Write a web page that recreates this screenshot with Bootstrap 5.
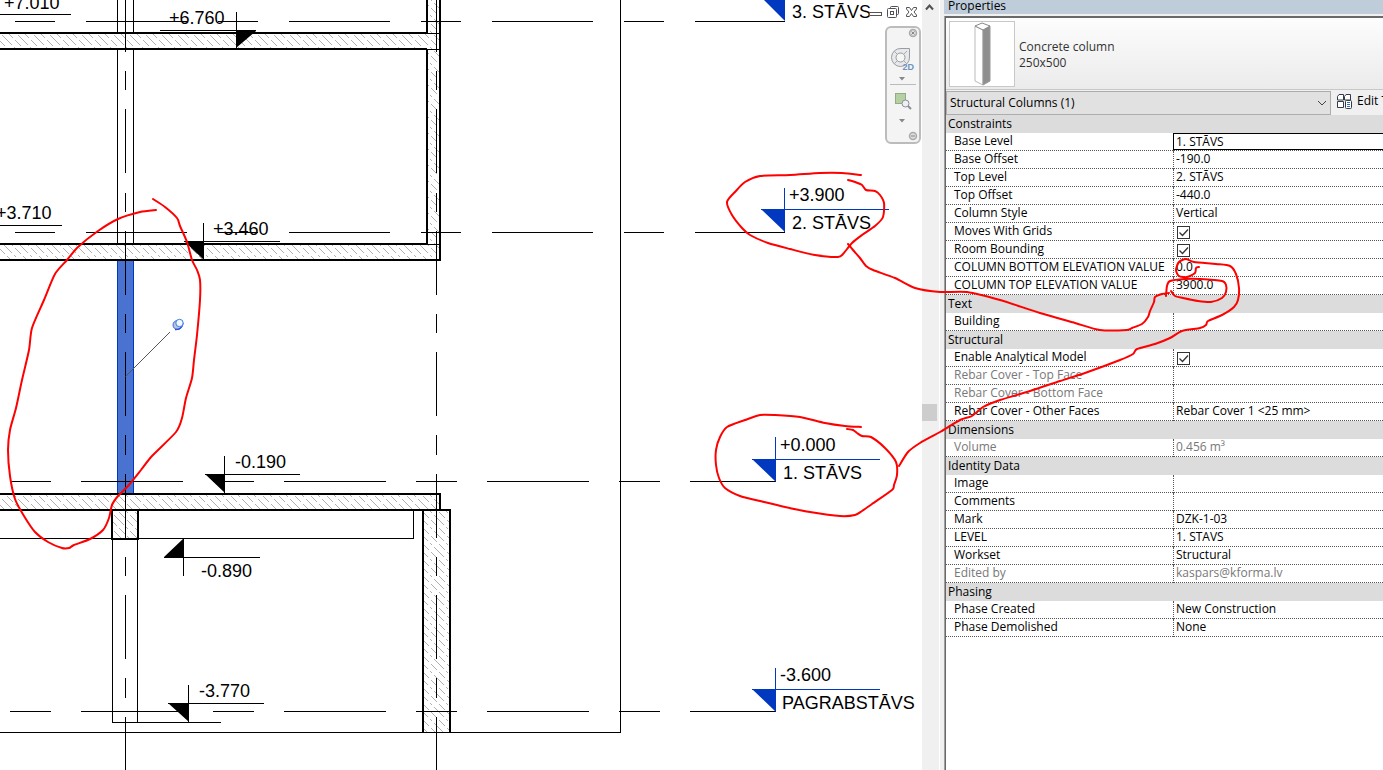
<!DOCTYPE html>
<html lang="en">
<head>
<meta charset="utf-8">
<meta name="viewport" content="width=device-width, initial-scale=1">
<title>Section view with column properties</title>
<link href="https://cdn.jsdelivr.net/npm/bootstrap@5.3.0/dist/css/bootstrap.min.css" rel="stylesheet">
<style>
  body { font-family: "Open Sans", "Noto Sans", sans-serif; font-size: 12px; line-height: 16px; color: #000; background: #fff; }
  .tag-text { font-family: "Liberation Sans", Arial, sans-serif; font-size: 18px; fill: #000; }
  .thin { stroke: #000; stroke-width: 1; fill: none; shape-rendering: crispEdges; }
  .thick { stroke: #000; stroke-width: 2; fill: none; shape-rendering: crispEdges; }
  .level { stroke: #0038c0; stroke-width: 1; fill: none; shape-rendering: crispEdges; }
  .level-fill { fill: #0038c0; }
  .markup path { fill: none; stroke: #f00; stroke-width: 2; stroke-linecap: round; stroke-linejoin: round; }
  .markup { pointer-events: none; }
  .view-controls { top: 4px; right: 4px; gap: 4px; }
  .nav-widget { top: 26px; right: 1px; width: 36px; height: 118px; border: 2px solid #bcbcbc; border-radius: 6px; background: #f4f4f4; }
  .bare { border: 0; padding: 0; background: none; display: flex; line-height: 0; }
  .scroll-track { width: 17px; background: #f0f0f0; }
  .scroll-thumb { height: 17px; width: 15px; background: #cdcdcd; top: 404px; }
  .splitter { width: 5px; background: #f0f0f0; border-left: 1px solid #fff; }
  .props { width: 439px; background: #f0f0f0; }
  .props-title { height: 14px; line-height: 12px; padding-left: 4px; background: #bfcddb; }
  .props-body { border-left: 1px solid #696969; border-top: 2px solid #696969; box-shadow: -1px 0 #a0a0a0; margin: 2px 0 0 1px; background: #fff; }
  .type-box { height: 72px; padding: 3px; background: linear-gradient(#fdfdfd, #ebebeb); border-bottom: 1px solid #c8c8c8; color: #333; }
  .type-name { padding-top: 2px; }
  .thumb { width: 66px; height: 66px; background: #fff; border: 1px solid #c8c8c8; }
  .filter-row { height: 25px; background: #f0f0f0; padding-top: 1px; }
  .filter { width: 385px; height: 24px; border: 1px solid #adadad; background: #e1e1e1; padding: 0 3px; font: inherit; line-height: 22px; appearance: none; color: #000; }
  .filter-wrap svg { right: 4px; top: 9px; pointer-events: none; }
  .edit-type { font: inherit; color: #000; gap: 4px; padding: 0 0 4px 5px; }
  .grid { border-collapse: separate; border-spacing: 0; table-layout: fixed; line-height: 16px; }
  .grid col:first-child { width: 227px; }
  .grid th, .grid td { height: 18px; padding: 0 0 1px; font-weight: 400; white-space: nowrap; vertical-align: middle; }
  .grid thead th { background: #dcdcdc; padding: 0 0 1px 2px; }
  .grid tbody th, .grid tbody td { border-bottom: 1px dotted #555; }
  .grid tbody th { padding-left: 8px; }
  .grid td { border-left: 1px dotted #555; padding-left: 2px; }
  .grid td.editing { padding: 0; border-left: 0; }
  .editing input { height: 17px; border: 1px solid #000; border-right: 0; padding: 0 2px 1px; outline: 0; font: inherit; display: block; width: 100%; }
  .grid .off { color: #787878; }
  .tick { appearance: none; width: 13px; height: 13px; border: 1px solid #333; margin: 3px 0 0 1px; display: block; background: #fff url("data:image/svg+xml,%3Csvg xmlns='http://www.w3.org/2000/svg' viewBox='0 0 11 11'%3E%3Cpath d='M1.500 5.500 4.500 8.500 10 2.500' fill='none' stroke='%23333' stroke-width='1.300'/%3E%3C/svg%3E"); }
</style>
<script src="https://cdn.jsdelivr.net/npm/bootstrap@5.3.0/dist/js/bootstrap.bundle.min.js"></script>
</head>
<body>
<div class="d-flex vh-100 overflow-hidden position-relative">

  <main class="flex-grow-1 position-relative overflow-hidden">
    <svg class="w-100 h-100 d-block" role="img" aria-label="Building section">
      <defs>
        <pattern id="hatch" width="16" height="16" patternUnits="userSpaceOnUse" patternTransform="translate(2 3)">
          <path d="M0 0 10 10M12 12 14 14M8 0 11 3M13 5 16 8M0 8 3 11M5 13 8 16" stroke="#b0b0b0" fill="none" shape-rendering="crispEdges"/>
        </pattern>
      </defs>
      <!-- slabs, walls and beam in section -->
      <g fill="url(#hatch)">
        <path d="M0 33H440V49H0ZM427 0H440V260H427ZM0 244H427V260H0ZM0 494H440V510H0ZM112 510H138V539H112ZM423 510H450V732H423Z"/>
      </g>
      <rect x="117" y="261" width="17" height="232" fill="#4a73d1"/>
      <path class="level" d="M117.500 261V493M133.500 261V493"/>
      <path class="thick" d="M0 33H427M427 0V34M440 0V261M0 49H427M427 49V245M0 244H427M0 260H441M0 494H441M440 494V510M0 510H451M112 510V540M138 510V540M112 539H139M423 510V733M450 510V733"/>
      <path class="thin" d="M427 33.500H440M427 49.500H440M427 244.500H440M117.500 0V32M133.500 0V32M117.500 50V243M133.500 50V243"/>
      <path class="thin" d="M0 538.500H413.500V511M112.500 540V722.500H221M137.500 540V722M0 732.500H620.500V0"/>
      <!-- grid centre lines -->
      <path class="thin" d="M125.500 0V52M125.500 71V90M125.500 109V173M125.500 193V212M125.500 231V295M125.500 314V333M125.500 352V416M125.500 435V455M125.500 474V538M125.500 557V576M125.500 595V659M125.500 678V698M125.500 717V2000"/>
      <path class="thin" d="M436.500 0V52M436.500 71V90M436.500 109V173M436.500 193V212M436.500 231V295M436.500 314V333M436.500 352V416M436.500 435V455M436.500 474V538M436.500 557V576M436.500 595V659M436.500 678V698M436.500 717V2000"/>
      <!-- level lines -->
      <path class="thin" d="M15 21.500H55M86 21.500H187M218 21.500H258M289 21.500H390M421 21.500H461M492 21.500H593M624 21.500H664M695 21.500H785"/>
      <path class="thin" d="M15 232.500H55M86 232.500H187M218 232.500H258M289 232.500H390M421 232.500H461M492 232.500H593M624 232.500H664M695 232.500H785"/>
      <path class="thin" d="M10 481.500H51M81 481.500H183M213 481.500H254M284 481.500H386M416 481.500H457M487 481.500H589M619 481.500H660M690 481.500H776"/>
      <path class="thin" d="M10 711.500H51M81 711.500H183M213 711.500H254M284 711.500H386M416 711.500H457M487 711.500H589M619 711.500H660M690 711.500H776"/>
      <!-- level heads -->
      <path class="level-fill" d="M762 -2H785V21ZM761 209H785V232ZM752 459H776V482ZM752 689H776V712Z"/>
      <path class="level" d="M784.500 188V232M761 209.500H889M775.500 437V481M752 459.500H880M775.500 668V711M752 689.500H880"/>
      <!-- spot elevations -->
      <path d="M236 31H256L236 48ZM184 241H204V260ZM205 474H225V493ZM164 557 184 538V557ZM168 703H189V722Z"/>
      <path class="thin" d="M0 14.500H71M160 30.500H256M236.500 12V48M0 225.500H62M184 241.500H280M203.500 223V260M205 474.500H300M224.500 456V493M164 557.500H260M183.500 538V576M168 703.500H264M188.500 685V722"/>
      <g class="tag-text">
        <text x="4" y="9">+7.010</text>
        <text x="169" y="24">+6.760</text>
        <text x="-4" y="219">+3.710</text>
        <text x="213" y="235">+3.460</text>
        <text x="235" y="468">-0.190</text>
        <text x="201" y="577">-0.890</text>
        <text x="199" y="697">-3.770</text>
        <text x="792" y="18">3. STĀVS</text>
        <text x="789" y="201">+3.900</text>
        <text x="792" y="229">2. STĀVS</text>
        <text x="780" y="451">+0.000</text>
        <text x="783" y="479">1. STĀVS</text>
        <text x="780" y="681">-3.600</text>
        <text x="782" y="709">PAGRABSTĀVS</text>
      </g>
      <!-- pin on the selected column -->
      <path d="M125.500 376.500 170 332" stroke="#555" fill="none"/>
      <circle cx="177.500" cy="325" r="4.500" fill="#b9c6d6" stroke="#3b63f0"/>
      <path d="M175 329.500Q182 330 183 323" stroke="#2a4fe0" stroke-width="1.500" fill="none"/>
      <circle cx="179.500" cy="323" r="3.700" fill="#eefaff" stroke="#3b7be8"/>
    </svg>

    <div class="view-controls position-absolute d-flex align-items-center">
      <button class="bare" type="button" aria-label="Minimize"><svg width="14" height="16"><rect x="1.500" y="8.500" width="12" height="3" fill="#fff" stroke="#555"/></svg></button>
      <button class="bare" type="button" aria-label="Restore"><svg width="14" height="16" fill="#fff" stroke="#505058"><rect x="4.500" y="2.500" width="8" height="8" rx="1"/><rect x="1.500" y="4.500" width="9" height="9" rx="1"/><rect x="4.500" y="7.500" width="3" height="3"/></svg></button>
      <button class="bare" type="button" aria-label="Close"><svg width="14" height="16" fill="#fff" stroke="#555"><path d="M2.500 3.500H5.500L7.500 6.500 9.500 3.500H12.500V5L10 8 12.500 11V12.500H9.500L7.500 9.500 5.500 12.500H2.500V11L5 8 2.500 5Z"/></svg></button>
    </div>

    <div class="nav-widget position-absolute">
      <svg width="32" height="114" viewBox="0 0 32 114" fill="none">
        <circle cx="26" cy="5" r="3.500" fill="#ddd" stroke="#aaa" stroke-width="1.500"/><path d="m24.500 3.500 3 3m0-3-3 3" stroke="#888"/>
        <path d="M14 20.500H22.500V29A9 9 0 1 1 14 20.500Z" fill="#e7e9ec" stroke="#9a9ca0"/>
        <circle cx="13.500" cy="29.500" r="4.500" fill="#f6f6f6" stroke="#999"/>
        <path d="m7 23 3 3m7 7 3 3m0-13-3 3m-7 7-3 3" stroke="#aaa"/>
        <text x="15.500" y="42" font-family="Liberation Sans, sans-serif" font-size="9" font-weight="700" fill="#6f93bd">2D</text>
        <path d="M12 49h6l-3 3.500ZM12 91h6l-3 3.500Z" fill="#888"/>
        <path d="M3 56.500h26" stroke="#bbb"/>
        <rect x="8.500" y="65.500" width="10" height="10" fill="#b5d1a4" stroke="#94ac86"/>
        <circle cx="18.500" cy="75.500" r="3.500" fill="#eef0f6" stroke="#8c8f96"/><path d="m21 78 3 3" stroke="#8c8f96" stroke-width="2"/>
        <circle cx="26" cy="108" r="3.500" fill="#ddd" stroke="#aaa" stroke-width="1.500"/><path d="M24 108h4" stroke="#888"/>
      </svg>
    </div>
  </main>

  <div class="scroll-track flex-shrink-0 position-relative">
    <svg class="d-block" width="17" height="17" fill="none"><path d="m4 9.500 3.500-4 3.500 4" stroke="#505050" stroke-width="2"/></svg>
    <div class="scroll-thumb position-absolute"></div>
  </div>
  <div class="splitter flex-shrink-0"></div>

  <aside class="props flex-shrink-0 d-flex flex-column overflow-hidden">
    <div class="props-title">Properties</div>
    <div class="props-body flex-grow-1">
      <div class="type-box d-flex align-items-center gap-1">
        <div class="thumb flex-shrink-0">
          <svg class="d-block" width="64" height="64" stroke-width="1"><path d="M25 4 33 8V63L25 59Z" fill="#fff" stroke="#bbb"/><path d="M33 8 40 4V59L33 63Z" fill="#8f8f8f" stroke="#999"/><path d="m25 4 7-3 8 3-7 4Z" fill="#fff" stroke="#888"/></svg>
        </div>
        <div class="type-name">Concrete column<br>250x500</div>
      </div>
      <div class="filter-row d-flex">
        <div class="filter-wrap position-relative flex-shrink-0">
          <select class="filter d-block" aria-label="Category filter"><option>Structural Columns (1)</option></select>
          <svg class="position-absolute" width="10" height="7" fill="none"><path d="m1 1 4 4 4-4" stroke="#444"/></svg>
        </div>
        <button class="bare edit-type flex-shrink-0 align-items-center" type="button">
          <svg width="17" height="17" fill="#fff" stroke="#333b48"><path d="M1.500 3.500 3 1.500H7.500V7H1.500ZM8.500 3.500 10 1.500H14.500V7H8.500ZM1.500 8.500H7.500V14.500H1.500Z"/><rect x="9.500" y="7.500" width="6" height="8" rx="1"/><path d="M11 9.500h3M11 11.500h3M11 13.500h3" stroke="#2f6fb5"/></svg>
          <span>Edit Type</span>
        </button>
      </div>
      <table class="grid w-100">
        <colgroup><col><col></colgroup>
        <thead><tr><th colspan="2">Constraints</th></tr></thead>
        <tbody>
          <tr><th><label for="base">Base Level</label></th><td class="editing"><input id="base" type="text" value="1. STĀVS"></td></tr>
          <tr><th>Base Offset</th><td>-190.0</td></tr>
          <tr><th>Top Level</th><td>2. STĀVS</td></tr>
          <tr><th>Top Offset</th><td>-440.0</td></tr>
          <tr><th>Column Style</th><td>Vertical</td></tr>
          <tr><th><label for="moves">Moves With Grids</label></th><td><input class="tick" id="moves" type="checkbox" checked></td></tr>
          <tr><th><label for="room">Room Bounding</label></th><td><input class="tick" id="room" type="checkbox" checked></td></tr>
          <tr><th>COLUMN BOTTOM ELEVATION VALUE</th><td>0.0</td></tr>
          <tr><th>COLUMN TOP ELEVATION VALUE</th><td>3900.0</td></tr>
        </tbody>
      </table>
      <table class="grid w-100">
        <colgroup><col><col></colgroup>
        <thead><tr><th colspan="2">Text</th></tr></thead>
        <tbody><tr><th>Building</th><td></td></tr></tbody>
      </table>
      <table class="grid w-100">
        <colgroup><col><col></colgroup>
        <thead><tr><th colspan="2">Structural</th></tr></thead>
        <tbody>
          <tr><th><label for="analytical">Enable Analytical Model</label></th><td><input class="tick" id="analytical" type="checkbox" checked></td></tr>
          <tr><th class="off">Rebar Cover - Top Face</th><td></td></tr>
          <tr><th class="off">Rebar Cover - Bottom Face</th><td></td></tr>
          <tr><th>Rebar Cover - Other Faces</th><td>Rebar Cover 1 &lt;25 mm&gt;</td></tr>
        </tbody>
      </table>
      <table class="grid w-100">
        <colgroup><col><col></colgroup>
        <thead><tr><th colspan="2">Dimensions</th></tr></thead>
        <tbody><tr><th class="off">Volume</th><td class="off">0.456 m³</td></tr></tbody>
      </table>
      <table class="grid w-100">
        <colgroup><col><col></colgroup>
        <thead><tr><th colspan="2">Identity Data</th></tr></thead>
        <tbody>
          <tr><th>Image</th><td></td></tr>
          <tr><th>Comments</th><td></td></tr>
          <tr><th>Mark</th><td>DZK-1-03</td></tr>
          <tr><th>LEVEL</th><td>1. STAVS</td></tr>
          <tr><th>Workset</th><td>Structural</td></tr>
          <tr><th class="off">Edited by</th><td class="off">kaspars@kforma.lv</td></tr>
        </tbody>
      </table>
      <table class="grid w-100">
        <colgroup><col><col></colgroup>
        <thead><tr><th colspan="2">Phasing</th></tr></thead>
        <tbody>
          <tr><th>Phase Created</th><td>New Construction</td></tr>
          <tr><th>Phase Demolished</th><td>None</td></tr>
        </tbody>
      </table>
    </div>
  </aside>

  <!-- freehand redline notes over the view and the panel -->
  <svg class="markup position-absolute top-0 start-0 w-100 h-100" aria-hidden="true"></svg>
</div>
<script>
  // each stroke is a list of x,y points, joined by a smooth curve
  const strokes = [
    "156,210 140,212 118,219 98,231 78,247 67,260 55,274 44,300 32,328 29,350 22,380 16,408 10,430 8,450 10,476 15,499 24,516 35,532 48,542 62,548 69,548 74,545 90,539 103,530 109,518 112,505 118,496 128,486 141,470 152,456 176,432 182,418 186,398 192,378 194,360 197,335 200,300 200,280 197,270 192,260 187,242 180,226 177,218 165,207 153,199",
    "861,175 842,173 820,173 790,175 760,176 745,182 735,192 727,202 732,215 742,228 750,235 768,243 790,249 815,255 838,257 843,254 852,243 862,235 875,226 883,217 884,203 880,195 875,191 866,190 862,185 855,182 848,180",
    "848,244 853,250 860,258 866,266 873,270 895,278 915,288 940,292 967,292 1000,300 1040,313 1075,323 1100,330 1127,330 1132,328 1142,324 1148,317 1150,311 1154,302 1155,297 1162,294 1169,293",
    "1166,296 1167,286 1170,281 1185,279 1200,279 1222,281 1226,285 1226,292 1222,298 1211,302 1198,301 1183,298 1175,296 1171,291",
    "1199,267 1196,268 1195,273 1187,277 1179,276 1176,270 1179,262 1186,259 1194,262 1216,264 1230,266 1236,274 1239,288 1238,300 1234,307 1222,315 1208,321 1206,325 1200,328 1182,331 1170,338 1155,344 1137,349 1133,354 1120,360 1085,373 1060,381 1030,391 1000,400 983,407 972,416 960,420 940,432 920,443 908,452 899,466",
    "861,427 845,426 825,423 800,417 775,415 760,415 745,420 727,427 720,437 716,450 716,465 719,478 725,488 740,496 760,501 785,507 810,512 840,516 855,515 862,511 872,504 892,490 894,485 897,475 896,462 885,448 871,437 862,436 857,433 853,430 847,429"
  ];
  const layer = document.querySelector(".markup");
  for (const stroke of strokes) {
    const p = stroke.split(" ").map(s => s.split(",").map(Number));
    let d = "M" + p[0];
    for (let i = 0; i < p.length - 1; i++) {
      const a = p[i - 1] || p[i], b = p[i], c = p[i + 1], e = p[i + 2] || c;
      d += `C${b[0] + (c[0] - a[0]) / 8},${b[1] + (c[1] - a[1]) / 8} ${c[0] - (e[0] - b[0]) / 8},${c[1] - (e[1] - b[1]) / 8} ${c[0]},${c[1]}`;
    }
    const path = document.createElementNS("http://www.w3.org/2000/svg", "path");
    path.setAttribute("d", d);
    layer.append(path);
  }
</script>
</body>
</html>
